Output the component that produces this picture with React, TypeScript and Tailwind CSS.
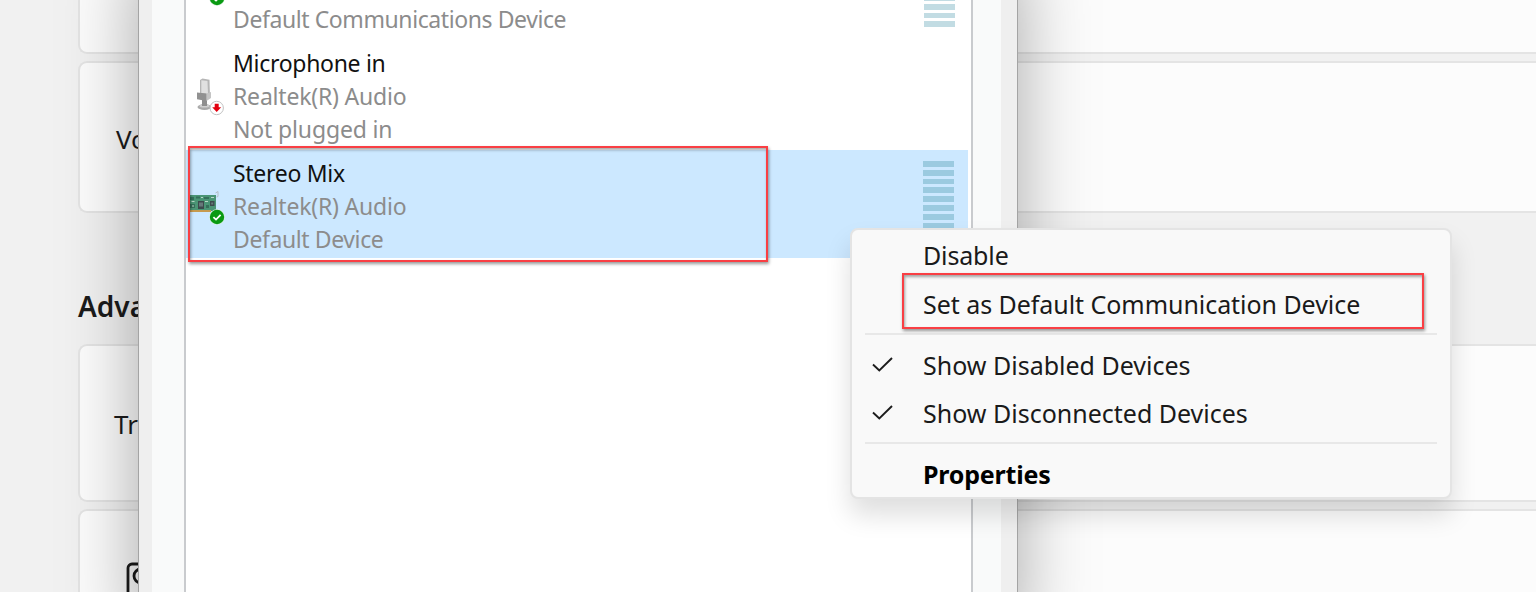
import React from 'react';

type Run = { text: string; cls: string };

function DeviceLine({ text, cls }: Run) {
  return <div className={`h-[33px] whitespace-nowrap leading-[33px] ${cls}`}>{text}</div>;
}

function Meter({ count, color }: { count: number; color: string }) {
  return (
    <div className="flex w-[31px] flex-col gap-[3px]">
      {Array.from({ length: count }, (_, i) => (
        <span key={i} className={`h-[5.8px] w-full shrink-0 ${color}`} />
      ))}
    </div>
  );
}

function CheckBadge() {
  return (
    <svg width="16" height="16" viewBox="0 0 16 16">
      <circle cx="8" cy="8" r="7.8" fill="#d9efdf" />
      <circle cx="8" cy="8" r="7.2" fill="#0a9a12" />
      <path d="M4.4 8.2 7 10.6 11.6 5.8" fill="none" stroke="#fff" strokeWidth="1.8" />
    </svg>
  );
}

function MicrophoneIcon() {
  return (
    <svg width="32" height="40" viewBox="0 0 32 40">
      <ellipse cx="11.500" cy="31" rx="7" ry="3" fill="#a9a9a9" />
      <ellipse cx="11.500" cy="30" rx="5" ry="1.500" fill="#cfcfcf" />
      <path d="M9 23h5v7H9z" fill="#8e8e8e" />
      <path d="M7 4 9.500 2.500l7 1.200.5 17-3 3-7-1z" fill="#b5b5b5" />
      <path d="M8.300 4.300 14.500 5l.5 13-6.700-.8z" fill="#e0e0e0" />
      <path d="M4 16.500 13.500 17.500v7.500L4 23.300z" fill="#919191" />
      <path d="M13.500 17.500l4.500-1.500v6l-4.500 3z" fill="#c4c4c4" />
      <circle cx="23.700" cy="32" r="6.700" fill="#fff" stroke="#c2c2c2" />
      <path d="M21.700 27.800h4v3.500h2.500L23.700 36l-4.500-4.700h2.500z" fill="#e3000f" />
    </svg>
  );
}

function SoundCardIcon() {
  return (
    <svg width="32" height="36" viewBox="0 0 32 36">
      <path d="M27.500 4 30 2.500v5L28.500 8" fill="none" stroke="#b3bcc4" />
      <path d="M1 6h27v16H1z" fill="#4a9575" />
      <path d="M1 21h22v2H1z" fill="#c69a4e" />
      <path d="M2 8h4v3H2zM8 7.500h4v2H8zM16 8h5v2h-5zM2 15h5v4H2zM18 16h3v3h-3z" fill="#35705a" />
      <path d="M10 12h6v8h-6zM22 12h4.500v5H22z" fill="#3c4a4c" />
      <path d="M11 13.500h4v4h-4zM23.200 13.500h2v2h-2z" fill="#67787a" />
      <path d="M3.500 12.500h3M17 12.500h3M23 8.500h3M4 17h2M13 8.500h2" stroke="#b8d8c7" />
    </svg>
  );
}

function Tick() {
  return (
    <svg width="22" height="18" viewBox="0 0 22 18">
      <path d="M1 9.500 7.300 15.500 20 3" fill="none" stroke="#1c1c1c" strokeWidth="1.900" />
    </svg>
  );
}

function SettingsPage() {
  const card = 'ml-[78px] shrink-0 rounded-l-[9px] border-2 border-r-0 border-[#e4e4e4] bg-[#fcfcfc]';
  return (
    <div className="flex h-full flex-col text-[26px] text-[#1b1b1b]">
      <div className={`${card} -mt-5 h-[74px]`} />
      <div className={`${card} mt-[7px] h-[152px] pl-[36px] pt-[56px] leading-[40px]`}>Volume</div>
      <div className="ml-[78px] flex h-[131px] shrink-0 items-center pt-[55px] text-[28px] font-semibold">Advanced</div>
      <div className={`${card} h-[158px] pl-[34px] pt-[58px] leading-[40px]`}>Troubleshoot</div>
      <div className={`${card} mt-[7px] h-[120px] pl-[46px] pt-[51px]`}>
        <svg width="40" height="40" viewBox="0 0 40 40" fill="none" stroke="#1b1b1b" strokeWidth="2.800">
          <rect x="2" y="2" width="32" height="36" rx="4" />
          <circle cx="15" cy="14" r="7" />
        </svg>
      </div>
    </div>
  );
}

function SoundDialog() {
  return (
    <div className="absolute -top-10 left-[138px] flex h-[680px] w-[880px] border-x border-[#a4a4a4] bg-[#efefef] pl-[13px] pr-[16px] pt-10 shadow-[0_0_70px_rgba(0,0,0,0.34)]">
      <div className="flex w-full bg-[#f9fafa] pl-[32px] pr-[28px]">
        <div className="flex w-full flex-col border-x-2 border-[#c9cbce] bg-white text-[23px] text-[#8c8c8c]">
          <div className="flex h-[41px] justify-between pl-[10px] pr-[16px]">
            <div className="flex">
              <div className="-mt-[10px] w-[37px] pl-[13px]"><CheckBadge /></div>
              <DeviceLine text="Default Communications Device" cls="pt-[3px] tracking-[-0.41px]" />
            </div>
            <div className="-mt-[5px]"><Meter count={4} color="bg-[#c2dce3]" /></div>
          </div>
          <div className="flex h-[109px] pl-[7px] pt-[6px]">
            <div className="w-[40px] pt-[29px]"><MicrophoneIcon /></div>
            <div>
              <DeviceLine text="Microphone in" cls="text-[#111] tracking-[-0.3px]" />
              <DeviceLine text="Realtek(R) Audio" cls="tracking-[-0.2px]" />
              <DeviceLine text="Not plugged in" cls="tracking-[-0.15px]" />
            </div>
          </div>
          <div className="mr-[3px] flex h-[108px] justify-between bg-[#cce8ff] pl-[2px] pr-[14px] pt-[7px]">
            <div className="flex">
              <div className="relative w-[45px] pt-[32px]">
                <SoundCardIcon />
                <div className="absolute left-[21px] top-[52px]"><CheckBadge /></div>
              </div>
              <div>
                <DeviceLine text="Stereo Mix" cls="text-[#111] tracking-[-0.3px]" />
                <DeviceLine text="Realtek(R) Audio" cls="tracking-[-0.2px]" />
                <DeviceLine text="Default Device" cls="tracking-[-0.4px]" />
              </div>
            </div>
            <div className="pt-[4px]"><Meter count={10} color="bg-[#9bcae0]" /></div>
          </div>
        </div>
      </div>
    </div>
  );
}

function MenuItem({ label, cls, checked }: { label: string; cls: string; checked?: boolean }) {
  return (
    <div className="flex h-[49px] items-center">
      <div className="w-[71px] pl-[20px]">{checked && <Tick />}</div>
      <span className={`whitespace-nowrap ${cls}`}>{label}</span>
    </div>
  );
}

function ContextMenu() {
  return (
    <div className="absolute left-[850px] top-[228px] flex h-[271px] w-[602px] flex-col rounded-[8px] border-2 border-[#e4e4e4] bg-[#f9f9f9] pt-[1px] text-[25px] text-[#1a1a1a] shadow-[0_16px_26px_rgba(0,0,0,0.13)]">
      <MenuItem label="Disable" cls="pt-[2px] tracking-[-0.15px]" />
      <MenuItem label="Set as Default Communication Device" cls="pt-[2px] tracking-[-0.05px]" />
      <div className="mx-[13px] my-[5px] h-[2px] shrink-0 bg-[#e8e8e8]" />
      <MenuItem label="Show Disabled Devices" cls="pt-[3px]" checked />
      <MenuItem label="Show Disconnected Devices" cls="pt-[3px]" checked />
      <div className="mx-[13px] my-[5px] h-[2px] shrink-0 bg-[#e8e8e8]" />
      <MenuItem label="Properties" cls="pt-[4px] font-bold text-black tracking-[-0.2px]" />
    </div>
  );
}

export default function App() {
  return (
    <div className="relative h-[592px] w-[1536px] overflow-hidden bg-[#f1f1f1] font-['Noto_Sans','Open_Sans',sans-serif]">
      <SettingsPage />
      <SoundDialog />
      <div className="absolute left-[188px] top-[146px] h-[116px] w-[580px] border-2 border-[#f93f44] shadow-[1px_2px_3px_rgba(0,0,0,0.4),inset_1px_2px_3px_rgba(0,0,0,0.35)]" />
      <ContextMenu />
      <div className="absolute left-[902px] top-[273px] h-[56px] w-[522px] border-2 border-[#f93f44] shadow-[1px_2px_3px_rgba(0,0,0,0.4),inset_1px_2px_3px_rgba(0,0,0,0.35)]" />
    </div>
  );
}
